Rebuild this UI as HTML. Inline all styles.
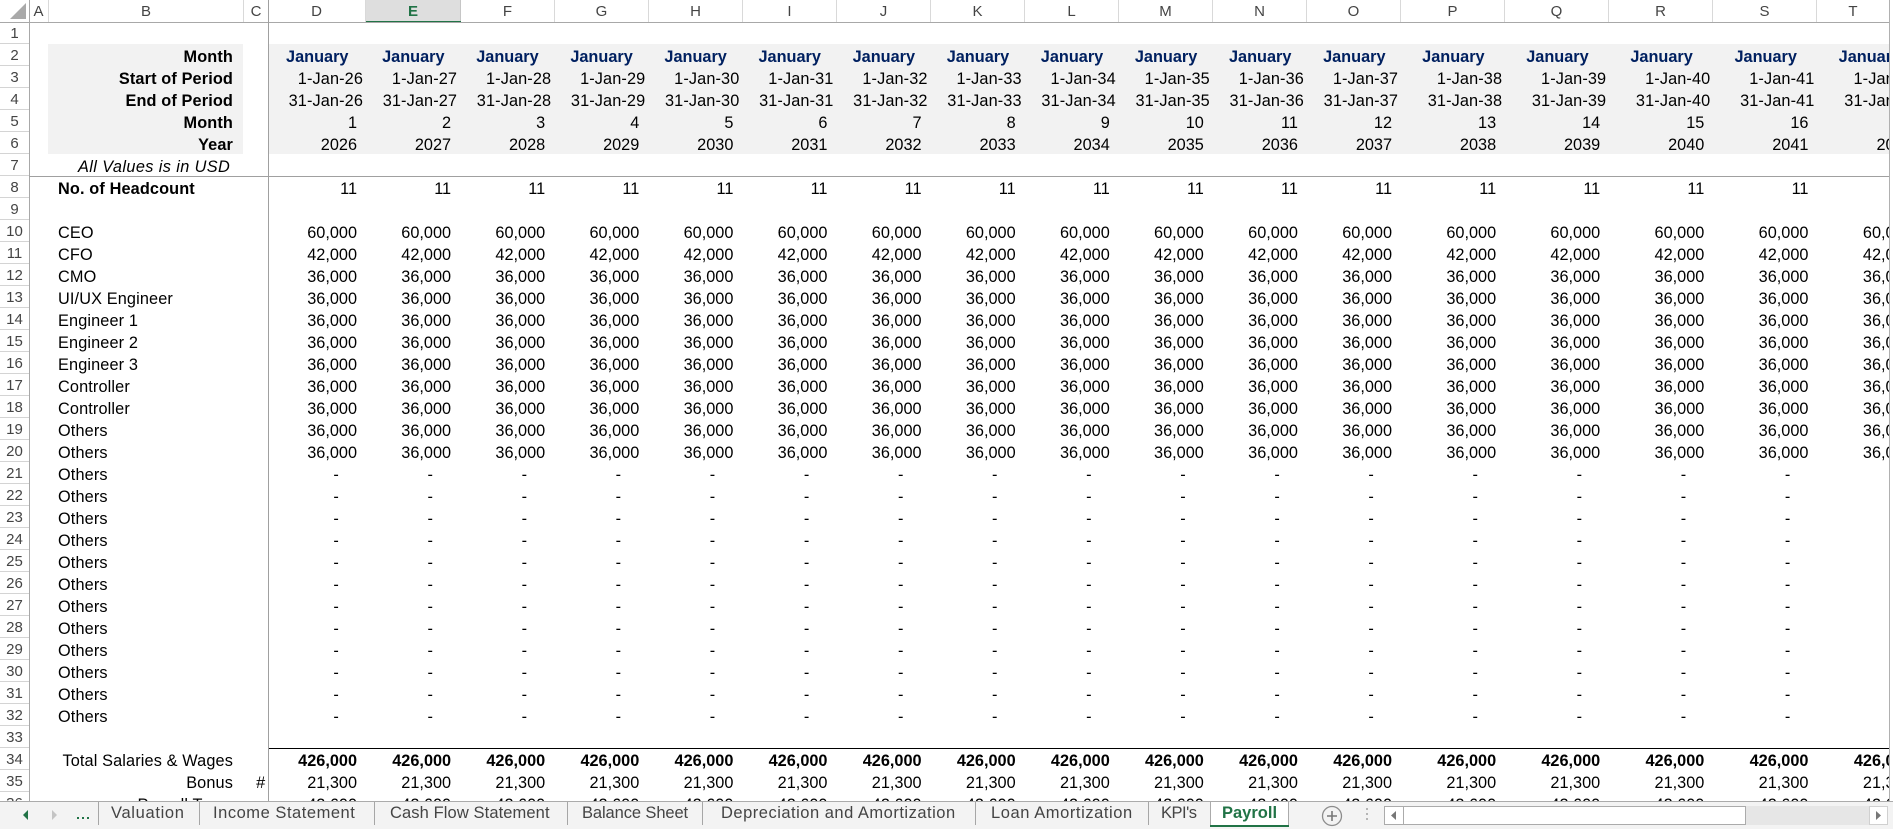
<!DOCTYPE html>
<html><head><meta charset="utf-8"><title>Payroll</title>
<style>
html,body{margin:0;padding:0;width:1893px;height:829px;overflow:hidden;background:#fff}
body{position:relative;font-family:"Liberation Sans",Arial,sans-serif}
.abs{position:absolute}
#grid{position:absolute;left:29px;top:22px;width:1860px;height:779px;overflow:hidden}
table{border-collapse:collapse;table-layout:fixed;width:1893px;font-size:16.3px;color:#000}
td,th{height:22px;padding:4px 9.3px 0 0;box-sizing:border-box;line-height:18px;text-align:right;white-space:nowrap;font-weight:normal;overflow:hidden}
th{text-align:left;padding-left:10px;padding-right:0;letter-spacing:.13px}
th.r{text-align:right;padding-left:0;padding-right:10.2px}
th.b,td.b{font-weight:bold}
th.i{font-style:italic;padding-right:13px;letter-spacing:.4px}
tr.g td.c,tr.g th{background:#f2f2f2}
tr.g td{background:#f2f2f2}
tr.g td.n{background:#fff}
td.j{text-align:center;padding-right:0;color:#002060;font-weight:bold}
td.d{padding-right:3.3px;letter-spacing:.12px}
td.x{padding-right:27.5px}
.ch{position:absolute;top:0;height:22px;line-height:23px;text-align:center;font-size:15px;color:#444;border-right:1px solid #d9d9d9;box-sizing:border-box}
.rh{height:22px;box-sizing:border-box;border-bottom:1px solid #d4d4d4;line-height:24px;text-align:center;font-size:15px;color:#444}
.tab{position:absolute;top:801px;line-height:25px;font-size:16.5px;color:#444;white-space:nowrap}
.sep{position:absolute;top:802px;width:1px;height:23px;background:#a6a6a6}
</style></head><body>
<svg class="abs" style="left:0;top:0" width="29" height="22"><polygon points="10,19 26,3 26,19" fill="#a9a9a9"/></svg>
<div class="ch" style="left:29px;width:20px">A</div>
<div class="ch" style="left:49px;width:195px">B</div>
<div class="ch" style="left:244px;width:25px">C</div>
<div class="ch" style="left:268px;width:98px">D</div>
<div class="ch" style="left:366px;width:95px;background:#dedede;color:#217346;font-weight:bold;border-right:1px solid #c6c6c6">E</div>
<div class="ch" style="left:461px;width:94px">F</div>
<div class="ch" style="left:555px;width:94px">G</div>
<div class="ch" style="left:649px;width:94px">H</div>
<div class="ch" style="left:743px;width:94px">I</div>
<div class="ch" style="left:837px;width:94px">J</div>
<div class="ch" style="left:931px;width:94px">K</div>
<div class="ch" style="left:1025px;width:94px">L</div>
<div class="ch" style="left:1119px;width:94px">M</div>
<div class="ch" style="left:1213px;width:94px">N</div>
<div class="ch" style="left:1307px;width:94px">O</div>
<div class="ch" style="left:1401px;width:104px">P</div>
<div class="ch" style="left:1505px;width:104px">Q</div>
<div class="ch" style="left:1609px;width:104px">R</div>
<div class="ch" style="left:1713px;width:104px">S</div>
<div class="ch" style="left:1817px;width:104px;border-right:0;width:72px">T</div>
<div class="abs" style="left:366px;top:21px;width:95px;height:2px;background:#217346"></div>

<div class="abs" style="left:0;top:22px;width:29px;height:779px;overflow:hidden">
<div class="rh">1</div><div class="rh">2</div><div class="rh">3</div><div class="rh">4</div><div class="rh">5</div><div class="rh">6</div><div class="rh">7</div><div class="rh">8</div><div class="rh">9</div><div class="rh">10</div><div class="rh">11</div><div class="rh">12</div><div class="rh">13</div><div class="rh">14</div><div class="rh">15</div><div class="rh">16</div><div class="rh">17</div><div class="rh">18</div><div class="rh">19</div><div class="rh">20</div><div class="rh">21</div><div class="rh">22</div><div class="rh">23</div><div class="rh">24</div><div class="rh">25</div><div class="rh">26</div><div class="rh">27</div><div class="rh">28</div><div class="rh">29</div><div class="rh">30</div><div class="rh">31</div><div class="rh">32</div><div class="rh">33</div><div class="rh">34</div><div class="rh">35</div><div class="rh">36</div>
</div>

<div id="grid"><table>
<colgroup><col style="width:19px"><col style="width:195px"><col style="width:25px"><col style="width:98px"><col span="11" style="width:94px"><col span="5" style="width:104px"></colgroup>
<tr><td class="n"></td><th></th><td></td><td colspan="16"></td></tr>
<tr class="g"><td class="n"></td><th class="r b">Month</th><td class="n"></td><td class="j">January</td><td class="j">January</td><td class="j">January</td><td class="j">January</td><td class="j">January</td><td class="j">January</td><td class="j">January</td><td class="j">January</td><td class="j">January</td><td class="j">January</td><td class="j">January</td><td class="j">January</td><td class="j">January</td><td class="j">January</td><td class="j">January</td><td class="j">January</td><td class="j">January</td></tr>
<tr class="g"><td class="n"></td><th class="r b">Start of Period</th><td class="n"></td><td class="d">1-Jan-26</td><td class="d">1-Jan-27</td><td class="d">1-Jan-28</td><td class="d">1-Jan-29</td><td class="d">1-Jan-30</td><td class="d">1-Jan-31</td><td class="d">1-Jan-32</td><td class="d">1-Jan-33</td><td class="d">1-Jan-34</td><td class="d">1-Jan-35</td><td class="d">1-Jan-36</td><td class="d">1-Jan-37</td><td class="d">1-Jan-38</td><td class="d">1-Jan-39</td><td class="d">1-Jan-40</td><td class="d">1-Jan-41</td><td class="d">1-Jan-42</td></tr>
<tr class="g"><td class="n"></td><th class="r b">End of Period</th><td class="n"></td><td class="d">31-Jan-26</td><td class="d">31-Jan-27</td><td class="d">31-Jan-28</td><td class="d">31-Jan-29</td><td class="d">31-Jan-30</td><td class="d">31-Jan-31</td><td class="d">31-Jan-32</td><td class="d">31-Jan-33</td><td class="d">31-Jan-34</td><td class="d">31-Jan-35</td><td class="d">31-Jan-36</td><td class="d">31-Jan-37</td><td class="d">31-Jan-38</td><td class="d">31-Jan-39</td><td class="d">31-Jan-40</td><td class="d">31-Jan-41</td><td class="d">31-Jan-42</td></tr>
<tr class="g"><td class="n"></td><th class="r b">Month</th><td class="n"></td><td>1</td><td>2</td><td>3</td><td>4</td><td>5</td><td>6</td><td>7</td><td>8</td><td>9</td><td>10</td><td>11</td><td>12</td><td>13</td><td>14</td><td>15</td><td>16</td><td>17</td></tr>
<tr class="g"><td class="n"></td><th class="r b">Year</th><td class="n"></td><td>2026</td><td>2027</td><td>2028</td><td>2029</td><td>2030</td><td>2031</td><td>2032</td><td>2033</td><td>2034</td><td>2035</td><td>2036</td><td>2037</td><td>2038</td><td>2039</td><td>2040</td><td>2041</td><td>2042</td></tr>
<tr><td></td><th class="r i">All Values is in USD</th><td></td><td colspan="16"></td></tr>
<tr><td></td><th class="b">No. of Headcount</th><td></td><td>11</td><td>11</td><td>11</td><td>11</td><td>11</td><td>11</td><td>11</td><td>11</td><td>11</td><td>11</td><td>11</td><td>11</td><td>11</td><td>11</td><td>11</td><td>11</td><td>11</td></tr>
<tr><td></td><th></th><td></td><td colspan="16"></td></tr>
<tr><td></td><th>CEO</th><td></td><td>60,000</td><td>60,000</td><td>60,000</td><td>60,000</td><td>60,000</td><td>60,000</td><td>60,000</td><td>60,000</td><td>60,000</td><td>60,000</td><td>60,000</td><td>60,000</td><td>60,000</td><td>60,000</td><td>60,000</td><td>60,000</td><td>60,000</td></tr>
<tr><td></td><th>CFO</th><td></td><td>42,000</td><td>42,000</td><td>42,000</td><td>42,000</td><td>42,000</td><td>42,000</td><td>42,000</td><td>42,000</td><td>42,000</td><td>42,000</td><td>42,000</td><td>42,000</td><td>42,000</td><td>42,000</td><td>42,000</td><td>42,000</td><td>42,000</td></tr>
<tr><td></td><th>CMO</th><td></td><td>36,000</td><td>36,000</td><td>36,000</td><td>36,000</td><td>36,000</td><td>36,000</td><td>36,000</td><td>36,000</td><td>36,000</td><td>36,000</td><td>36,000</td><td>36,000</td><td>36,000</td><td>36,000</td><td>36,000</td><td>36,000</td><td>36,000</td></tr>
<tr><td></td><th>UI/UX Engineer</th><td></td><td>36,000</td><td>36,000</td><td>36,000</td><td>36,000</td><td>36,000</td><td>36,000</td><td>36,000</td><td>36,000</td><td>36,000</td><td>36,000</td><td>36,000</td><td>36,000</td><td>36,000</td><td>36,000</td><td>36,000</td><td>36,000</td><td>36,000</td></tr>
<tr><td></td><th>Engineer 1</th><td></td><td>36,000</td><td>36,000</td><td>36,000</td><td>36,000</td><td>36,000</td><td>36,000</td><td>36,000</td><td>36,000</td><td>36,000</td><td>36,000</td><td>36,000</td><td>36,000</td><td>36,000</td><td>36,000</td><td>36,000</td><td>36,000</td><td>36,000</td></tr>
<tr><td></td><th>Engineer 2</th><td></td><td>36,000</td><td>36,000</td><td>36,000</td><td>36,000</td><td>36,000</td><td>36,000</td><td>36,000</td><td>36,000</td><td>36,000</td><td>36,000</td><td>36,000</td><td>36,000</td><td>36,000</td><td>36,000</td><td>36,000</td><td>36,000</td><td>36,000</td></tr>
<tr><td></td><th>Engineer 3</th><td></td><td>36,000</td><td>36,000</td><td>36,000</td><td>36,000</td><td>36,000</td><td>36,000</td><td>36,000</td><td>36,000</td><td>36,000</td><td>36,000</td><td>36,000</td><td>36,000</td><td>36,000</td><td>36,000</td><td>36,000</td><td>36,000</td><td>36,000</td></tr>
<tr><td></td><th>Controller</th><td></td><td>36,000</td><td>36,000</td><td>36,000</td><td>36,000</td><td>36,000</td><td>36,000</td><td>36,000</td><td>36,000</td><td>36,000</td><td>36,000</td><td>36,000</td><td>36,000</td><td>36,000</td><td>36,000</td><td>36,000</td><td>36,000</td><td>36,000</td></tr>
<tr><td></td><th>Controller</th><td></td><td>36,000</td><td>36,000</td><td>36,000</td><td>36,000</td><td>36,000</td><td>36,000</td><td>36,000</td><td>36,000</td><td>36,000</td><td>36,000</td><td>36,000</td><td>36,000</td><td>36,000</td><td>36,000</td><td>36,000</td><td>36,000</td><td>36,000</td></tr>
<tr><td></td><th>Others</th><td></td><td>36,000</td><td>36,000</td><td>36,000</td><td>36,000</td><td>36,000</td><td>36,000</td><td>36,000</td><td>36,000</td><td>36,000</td><td>36,000</td><td>36,000</td><td>36,000</td><td>36,000</td><td>36,000</td><td>36,000</td><td>36,000</td><td>36,000</td></tr>
<tr><td></td><th>Others</th><td></td><td>36,000</td><td>36,000</td><td>36,000</td><td>36,000</td><td>36,000</td><td>36,000</td><td>36,000</td><td>36,000</td><td>36,000</td><td>36,000</td><td>36,000</td><td>36,000</td><td>36,000</td><td>36,000</td><td>36,000</td><td>36,000</td><td>36,000</td></tr>
<tr><td></td><th>Others</th><td></td><td class="x">-</td><td class="x">-</td><td class="x">-</td><td class="x">-</td><td class="x">-</td><td class="x">-</td><td class="x">-</td><td class="x">-</td><td class="x">-</td><td class="x">-</td><td class="x">-</td><td class="x">-</td><td class="x">-</td><td class="x">-</td><td class="x">-</td><td class="x">-</td><td class="x">-</td></tr>
<tr><td></td><th>Others</th><td></td><td class="x">-</td><td class="x">-</td><td class="x">-</td><td class="x">-</td><td class="x">-</td><td class="x">-</td><td class="x">-</td><td class="x">-</td><td class="x">-</td><td class="x">-</td><td class="x">-</td><td class="x">-</td><td class="x">-</td><td class="x">-</td><td class="x">-</td><td class="x">-</td><td class="x">-</td></tr>
<tr><td></td><th>Others</th><td></td><td class="x">-</td><td class="x">-</td><td class="x">-</td><td class="x">-</td><td class="x">-</td><td class="x">-</td><td class="x">-</td><td class="x">-</td><td class="x">-</td><td class="x">-</td><td class="x">-</td><td class="x">-</td><td class="x">-</td><td class="x">-</td><td class="x">-</td><td class="x">-</td><td class="x">-</td></tr>
<tr><td></td><th>Others</th><td></td><td class="x">-</td><td class="x">-</td><td class="x">-</td><td class="x">-</td><td class="x">-</td><td class="x">-</td><td class="x">-</td><td class="x">-</td><td class="x">-</td><td class="x">-</td><td class="x">-</td><td class="x">-</td><td class="x">-</td><td class="x">-</td><td class="x">-</td><td class="x">-</td><td class="x">-</td></tr>
<tr><td></td><th>Others</th><td></td><td class="x">-</td><td class="x">-</td><td class="x">-</td><td class="x">-</td><td class="x">-</td><td class="x">-</td><td class="x">-</td><td class="x">-</td><td class="x">-</td><td class="x">-</td><td class="x">-</td><td class="x">-</td><td class="x">-</td><td class="x">-</td><td class="x">-</td><td class="x">-</td><td class="x">-</td></tr>
<tr><td></td><th>Others</th><td></td><td class="x">-</td><td class="x">-</td><td class="x">-</td><td class="x">-</td><td class="x">-</td><td class="x">-</td><td class="x">-</td><td class="x">-</td><td class="x">-</td><td class="x">-</td><td class="x">-</td><td class="x">-</td><td class="x">-</td><td class="x">-</td><td class="x">-</td><td class="x">-</td><td class="x">-</td></tr>
<tr><td></td><th>Others</th><td></td><td class="x">-</td><td class="x">-</td><td class="x">-</td><td class="x">-</td><td class="x">-</td><td class="x">-</td><td class="x">-</td><td class="x">-</td><td class="x">-</td><td class="x">-</td><td class="x">-</td><td class="x">-</td><td class="x">-</td><td class="x">-</td><td class="x">-</td><td class="x">-</td><td class="x">-</td></tr>
<tr><td></td><th>Others</th><td></td><td class="x">-</td><td class="x">-</td><td class="x">-</td><td class="x">-</td><td class="x">-</td><td class="x">-</td><td class="x">-</td><td class="x">-</td><td class="x">-</td><td class="x">-</td><td class="x">-</td><td class="x">-</td><td class="x">-</td><td class="x">-</td><td class="x">-</td><td class="x">-</td><td class="x">-</td></tr>
<tr><td></td><th>Others</th><td></td><td class="x">-</td><td class="x">-</td><td class="x">-</td><td class="x">-</td><td class="x">-</td><td class="x">-</td><td class="x">-</td><td class="x">-</td><td class="x">-</td><td class="x">-</td><td class="x">-</td><td class="x">-</td><td class="x">-</td><td class="x">-</td><td class="x">-</td><td class="x">-</td><td class="x">-</td></tr>
<tr><td></td><th>Others</th><td></td><td class="x">-</td><td class="x">-</td><td class="x">-</td><td class="x">-</td><td class="x">-</td><td class="x">-</td><td class="x">-</td><td class="x">-</td><td class="x">-</td><td class="x">-</td><td class="x">-</td><td class="x">-</td><td class="x">-</td><td class="x">-</td><td class="x">-</td><td class="x">-</td><td class="x">-</td></tr>
<tr><td></td><th>Others</th><td></td><td class="x">-</td><td class="x">-</td><td class="x">-</td><td class="x">-</td><td class="x">-</td><td class="x">-</td><td class="x">-</td><td class="x">-</td><td class="x">-</td><td class="x">-</td><td class="x">-</td><td class="x">-</td><td class="x">-</td><td class="x">-</td><td class="x">-</td><td class="x">-</td><td class="x">-</td></tr>
<tr><td></td><th>Others</th><td></td><td class="x">-</td><td class="x">-</td><td class="x">-</td><td class="x">-</td><td class="x">-</td><td class="x">-</td><td class="x">-</td><td class="x">-</td><td class="x">-</td><td class="x">-</td><td class="x">-</td><td class="x">-</td><td class="x">-</td><td class="x">-</td><td class="x">-</td><td class="x">-</td><td class="x">-</td></tr>
<tr><td></td><th></th><td></td><td colspan="16"></td></tr>
<tr><td></td><th class="r">Total Salaries &amp; Wages</th><td></td><td class="b">426,000</td><td class="b">426,000</td><td class="b">426,000</td><td class="b">426,000</td><td class="b">426,000</td><td class="b">426,000</td><td class="b">426,000</td><td class="b">426,000</td><td class="b">426,000</td><td class="b">426,000</td><td class="b">426,000</td><td class="b">426,000</td><td class="b">426,000</td><td class="b">426,000</td><td class="b">426,000</td><td class="b">426,000</td><td class="b">426,000</td></tr>
<tr><td></td><th class="r">Bonus</th><td style="padding-right:3px">#</td><td>21,300</td><td>21,300</td><td>21,300</td><td>21,300</td><td>21,300</td><td>21,300</td><td>21,300</td><td>21,300</td><td>21,300</td><td>21,300</td><td>21,300</td><td>21,300</td><td>21,300</td><td>21,300</td><td>21,300</td><td>21,300</td><td>21,300</td></tr>
<tr><td></td><th class="r" style="padding-right:25px">Payroll Tax</th><td></td><td>42,600</td><td>42,600</td><td>42,600</td><td>42,600</td><td>42,600</td><td>42,600</td><td>42,600</td><td>42,600</td><td>42,600</td><td>42,600</td><td>42,600</td><td>42,600</td><td>42,600</td><td>42,600</td><td>42,600</td><td>42,600</td><td>42,600</td></tr>
</table></div>

<div class="abs" style="left:268px;top:748px;width:1621px;height:1px;background:#000"></div>
<div class="abs" style="left:0;top:22px;width:1889px;height:1px;background:#a8a8a8"></div>
<div class="abs" style="left:29px;top:0;width:1px;height:801px;background:#a8a8a8"></div>
<div class="abs" style="left:268px;top:0;width:1px;height:801px;background:#a0a0a0"></div>
<div class="abs" style="left:29px;top:176px;width:1860px;height:1px;background:#a0a0a0"></div>
<div class="abs" style="left:1889px;top:0;width:1px;height:801px;background:#b0b0b0"></div>

<div class="abs" style="left:0;top:801px;width:1893px;height:28px;background:#f3f3f3;border-top:1px solid #ababab;box-sizing:border-box"></div>
<svg class="abs" style="left:0;top:802px" width="100" height="27"><polygon points="28,8 23,13 28,18" fill="#217346"/><polygon points="52,8 57,13 52,18" fill="#c4c4c4"/><rect x="77" y="15" width="2" height="2" fill="#217346"/><rect x="82" y="15" width="2" height="2" fill="#217346"/><rect x="87" y="15" width="2" height="2" fill="#217346"/></svg>
<div class="sep" style="left:98px"></div>
<div class="tab" style="left:111px;letter-spacing:.67px">Valuation</div>
<div class="sep" style="left:199px"></div>
<div class="tab" style="left:213px;letter-spacing:.53px">Income Statement</div>
<div class="sep" style="left:374px"></div>
<div class="tab" style="left:390px;letter-spacing:.1px">Cash Flow Statement</div>
<div class="sep" style="left:567px"></div>
<div class="tab" style="left:582px;letter-spacing:-.1px">Balance Sheet</div>
<div class="sep" style="left:702px"></div>
<div class="tab" style="left:721px;letter-spacing:.5px">Depreciation and Amortization</div>
<div class="sep" style="left:975px"></div>
<div class="tab" style="left:991px;letter-spacing:.57px">Loan Amortization</div>
<div class="sep" style="left:1148px"></div>
<div class="tab" style="left:1161px;letter-spacing:-.5px">KPI's</div>
<div class="abs" style="left:1210px;top:801px;width:79px;height:26px;background:#fff;border:1px solid #ababab;border-bottom:0;box-sizing:border-box;border-top:1px solid #ababab"></div>
<div class="abs" style="left:1210px;top:825px;width:79px;height:2px;background:#217346"></div>
<div class="tab" style="left:1222px;font-weight:bold;color:#217346">Payroll</div>

<svg class="abs" style="left:1320px;top:804px" width="24" height="24"><circle cx="12" cy="12" r="9.5" fill="none" stroke="#8c8c8c" stroke-width="1.3"/><path d="M7 12H17M12 7V17" stroke="#777" stroke-width="1.6"/></svg>
<svg class="abs" style="left:1364px;top:806px" width="6" height="18"><rect x="2" y="2" width="2" height="2" fill="#b5b5b5"/><rect x="2" y="7" width="2" height="2" fill="#b5b5b5"/><rect x="2" y="12" width="2" height="2" fill="#b5b5b5"/></svg>
<div class="abs" style="left:1384px;top:806px;width:504px;height:19px;background:#e6e6e6"></div>
<div class="abs" style="left:1384px;top:806px;width:20px;height:19px;background:#fff;border:1px solid #ababab;box-sizing:border-box"></div>
<div class="abs" style="left:1403px;top:806px;width:343px;height:19px;background:#fff;border:1px solid #ababab;box-sizing:border-box"></div>
<div class="abs" style="left:1869px;top:806px;width:19px;height:19px;background:#fff;border:1px solid #d0d0d0;box-sizing:border-box"></div>
<svg class="abs" style="left:1384px;top:806px" width="20" height="19"><polygon points="12,5 7,9.5 12,14" fill="#777"/></svg>
<svg class="abs" style="left:1869px;top:806px" width="19" height="19"><polygon points="7,5 12,9.5 7,14" fill="#777"/></svg>
</body></html>
